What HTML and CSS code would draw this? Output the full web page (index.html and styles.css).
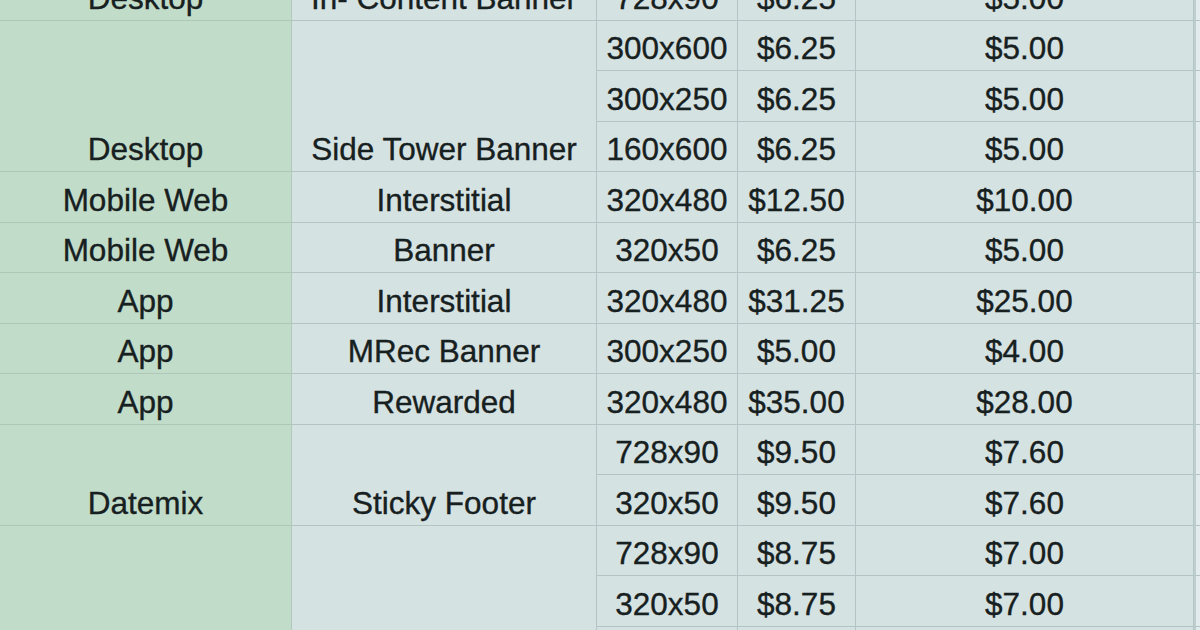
FILE: index.html
```html
<!DOCTYPE html>
<html>
<head>
<meta charset="utf-8">
<link rel="stylesheet" href="styles.css">
</head>
<body>
<div class="sheet">
  <!-- row 0 (partially visible) -->
  <div class="cell g" style="grid-row: 1">Desktop</div>
  <div class="cell" style="grid-row: 1">In- Content Banner</div>
  <div class="cell" style="grid-row: 1">728x90</div>
  <div class="cell" style="grid-row: 1">$6.25</div>
  <div class="cell" style="grid-row: 1">$5.00</div>
  <div class="cell edge" style="grid-row: 1"></div>

  <!-- Desktop / Side Tower Banner merged rows 2-4 -->
  <div class="cell g" style="grid-row: 2 / span 3">Desktop</div>
  <div class="cell" style="grid-row: 2 / span 3">Side Tower Banner</div>
  <div class="cell" style="grid-row: 2">300x600</div>
  <div class="cell" style="grid-row: 2">$6.25</div>
  <div class="cell" style="grid-row: 2">$5.00</div>
  <div class="cell edge" style="grid-row: 2"></div>
  <div class="cell" style="grid-row: 3">300x250</div>
  <div class="cell" style="grid-row: 3">$6.25</div>
  <div class="cell" style="grid-row: 3">$5.00</div>
  <div class="cell edge" style="grid-row: 3"></div>
  <div class="cell" style="grid-row: 4">160x600</div>
  <div class="cell" style="grid-row: 4">$6.25</div>
  <div class="cell" style="grid-row: 4">$5.00</div>
  <div class="cell edge" style="grid-row: 4"></div>

  <div class="cell g" style="grid-row: 5">Mobile Web</div>
  <div class="cell" style="grid-row: 5">Interstitial</div>
  <div class="cell" style="grid-row: 5">320x480</div>
  <div class="cell" style="grid-row: 5">$12.50</div>
  <div class="cell" style="grid-row: 5">$10.00</div>
  <div class="cell edge" style="grid-row: 5"></div>

  <div class="cell g" style="grid-row: 6">Mobile Web</div>
  <div class="cell" style="grid-row: 6">Banner</div>
  <div class="cell" style="grid-row: 6">320x50</div>
  <div class="cell" style="grid-row: 6">$6.25</div>
  <div class="cell" style="grid-row: 6">$5.00</div>
  <div class="cell edge" style="grid-row: 6"></div>

  <div class="cell g" style="grid-row: 7">App</div>
  <div class="cell" style="grid-row: 7">Interstitial</div>
  <div class="cell" style="grid-row: 7">320x480</div>
  <div class="cell" style="grid-row: 7">$31.25</div>
  <div class="cell" style="grid-row: 7">$25.00</div>
  <div class="cell edge" style="grid-row: 7"></div>

  <div class="cell g" style="grid-row: 8">App</div>
  <div class="cell" style="grid-row: 8">MRec Banner</div>
  <div class="cell" style="grid-row: 8">300x250</div>
  <div class="cell" style="grid-row: 8">$5.00</div>
  <div class="cell" style="grid-row: 8">$4.00</div>
  <div class="cell edge" style="grid-row: 8"></div>

  <div class="cell g" style="grid-row: 9">App</div>
  <div class="cell" style="grid-row: 9">Rewarded</div>
  <div class="cell" style="grid-row: 9">320x480</div>
  <div class="cell" style="grid-row: 9">$35.00</div>
  <div class="cell" style="grid-row: 9">$28.00</div>
  <div class="cell edge" style="grid-row: 9"></div>

  <!-- Datemix / Sticky Footer merged rows 10-11 -->
  <div class="cell g" style="grid-row: 10 / span 2">Datemix</div>
  <div class="cell" style="grid-row: 10 / span 2">Sticky Footer</div>
  <div class="cell" style="grid-row: 10">728x90</div>
  <div class="cell" style="grid-row: 10">$9.50</div>
  <div class="cell" style="grid-row: 10">$7.60</div>
  <div class="cell edge" style="grid-row: 10"></div>
  <div class="cell" style="grid-row: 11">320x50</div>
  <div class="cell" style="grid-row: 11">$9.50</div>
  <div class="cell" style="grid-row: 11">$7.60</div>
  <div class="cell edge" style="grid-row: 11"></div>

  <!-- merged rows 12-14 -->
  <div class="cell g" style="grid-row: 12 / span 3"></div>
  <div class="cell" style="grid-row: 12 / span 3"></div>
  <div class="cell" style="grid-row: 12">728x90</div>
  <div class="cell" style="grid-row: 12">$8.75</div>
  <div class="cell" style="grid-row: 12">$7.00</div>
  <div class="cell edge" style="grid-row: 12"></div>
  <div class="cell" style="grid-row: 13">320x50</div>
  <div class="cell" style="grid-row: 13">$8.75</div>
  <div class="cell" style="grid-row: 13">$7.00</div>
  <div class="cell edge" style="grid-row: 13"></div>
  <div class="cell" style="grid-row: 14"></div>
  <div class="cell" style="grid-row: 14"></div>
  <div class="cell" style="grid-row: 14"></div>
  <div class="cell edge" style="grid-row: 14"></div>
</div>
</body>
</html>
```

FILE: styles.css
```css
html, body {
  margin: 0;
  padding: 0;
  width: 1200px;
  height: 630px;
  overflow: hidden;
  background: #d5e2e2;
}

.sheet {
  display: grid;
  grid-template-columns: 292px 305px 141px 118px 338px 6px;
  grid-template-rows: 21px repeat(6, 50px 51px) 40px;
  grid-auto-flow: column dense;
  width: 1200px;
  font-family: "Liberation Sans", Arial, Helvetica, sans-serif;
  font-size: 31.5px;
  line-height: 1;
  color: #172020;
  -webkit-text-stroke: 0.35px #172020;
}

.cell {
  background: #d5e2e2;
  border-right: 1px solid #b3c4c4;
  border-bottom: 1px solid #b3c4c4;
  display: flex;
  align-items: flex-end;
  justify-content: center;
  padding-bottom: 6px;
  overflow: hidden;
  white-space: nowrap;
  box-sizing: border-box;
}

.cell.g {
  background: #c2dcca;
  border-right-color: #b3c7bd;
  border-bottom-color: #afc6b8;
}

.cell.edge {
  background: #e2ecec;
  border-right: none;
  border-left: 2px solid #bfcfcf;
  padding: 0;
}
```
